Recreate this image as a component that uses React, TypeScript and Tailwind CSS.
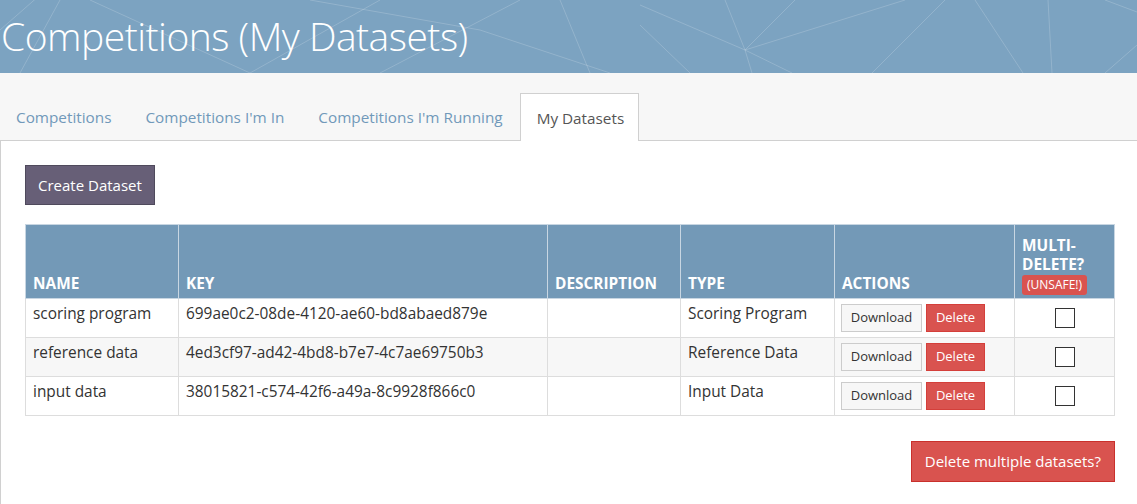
import React from "react";

const rows = [
  { name: "scoring program", key: "699ae0c2-08de-4120-ae60-bd8abaed879e", type: "Scoring Program" },
  { name: "reference data", key: "4ed3cf97-ad42-4bd8-b7e7-4c7ae69750b3", type: "Reference Data" },
  { name: "input data", key: "38015821-c574-42f6-a49a-8c9928f866c0", type: "Input Data" },
];

const tabs = ["Competitions", "Competitions I'm In", "Competitions I'm Running", "My Datasets"];

const BannerLines = () => (
  <svg className="absolute inset-0 h-full w-full" viewBox="0 0 1137 73" preserveAspectRatio="none">
    <g stroke="#ffffff" strokeOpacity="0.18" strokeWidth="1" fill="none">
      <line x1="0" y1="30" x2="40" y2="-5" />
      <line x1="60" y1="0" x2="20" y2="73" />
      <line x1="90" y1="0" x2="250" y2="73" />
      <line x1="250" y1="73" x2="380" y2="0" />
      <line x1="310" y1="0" x2="480" y2="30" />
      <line x1="480" y1="30" x2="610" y2="73" />
      <line x1="380" y1="73" x2="520" y2="0" />
      <line x1="560" y1="0" x2="590" y2="73" />
      <line x1="640" y1="5" x2="745" y2="50" />
      <line x1="640" y1="25" x2="690" y2="73" />
      <line x1="725" y1="0" x2="745" y2="50" />
      <line x1="745" y1="50" x2="795" y2="0" />
      <line x1="745" y1="50" x2="905" y2="0" />
      <line x1="745" y1="50" x2="752" y2="73" />
      <line x1="745" y1="50" x2="792" y2="73" />
      <line x1="872" y1="73" x2="945" y2="0" />
      <line x1="975" y1="0" x2="1023" y2="73" />
      <line x1="1048" y1="0" x2="1052" y2="73" />
      <line x1="1105" y1="0" x2="1137" y2="12" />
      <line x1="1105" y1="73" x2="1137" y2="45" />
    </g>
  </svg>
);

export default function App() {
  return (
    <div
      className="min-h-screen w-full bg-white text-[#333]"
      style={{ fontFamily: '"Open Sans", "Noto Sans", sans-serif' }}
    >
      <div className="relative h-[73px] overflow-hidden bg-[#7ca3c1]">
        <BannerLines />
        <h1 className="relative pl-[1px] pt-[11px] text-[39px] font-light leading-[50px] tracking-[-0.5px] text-white">
          Competitions (My Datasets)
        </h1>
      </div>

      <div className="flex h-[68px] items-end border-b border-[#d0d0d0] bg-[#f7f7f7]">
        <div className="-ml-px flex">
          {tabs.map((t, i) => {
            const active = i === tabs.length - 1;
            return (
              <div
                key={t}
                className={
                  active
                    ? "-mb-px flex h-[48px] items-center border border-b-0 border-[#d0d0d0] bg-white pl-[16px] pr-[14px] pt-[2px] text-[15.3px] text-[#555]"
                    : "flex h-[47px] items-center px-[17px] pt-[2px] text-[15.3px] text-[#7199ba]"
                }
              >
                {t}
              </div>
            );
          })}
        </div>
      </div>

      <div className="border-l border-[#d0d0d0] px-[24px] pt-[24px] pb-[22px]">
        <button className="h-[40px] border border-[#4f4a5c] bg-[#675f77] px-[12px] text-[15px] text-white">
          Create Dataset
        </button>

        <table className="mt-[19px] w-[1090px] border-collapse text-[15.4px]">
          <thead>
            <tr className="bg-[#7399b7] text-white">
              <th className="h-[74px] w-[153px] border border-[#c8d6e2] px-[7px] pb-[3px] text-left align-bottom font-bold uppercase">
                Name
              </th>
              <th className="w-[369px] border border-[#c8d6e2] px-[7px] pb-[3px] text-left align-bottom font-bold uppercase">
                Key
              </th>
              <th className="w-[133px] border border-[#c8d6e2] px-[7px] pb-[3px] text-left align-bottom font-bold uppercase">
                Description
              </th>
              <th className="w-[154px] border border-[#c8d6e2] px-[7px] pb-[3px] text-left align-bottom font-bold uppercase">
                Type
              </th>
              <th className="w-[180px] border border-[#c8d6e2] px-[7px] pb-[3px] text-left align-bottom font-bold uppercase">
                Actions
              </th>
              <th className="border border-[#c8d6e2] px-[7px] pb-[3px] text-left align-bottom font-bold uppercase leading-[19px]">
                <div>Multi-</div>
                <div>Delete?</div>
                <span className="mt-[1px] inline-block rounded-[3px] bg-[#d9534f] px-[5px] text-[12px] font-normal leading-[20px]">
                  (UNSAFE!)
                </span>
              </th>
            </tr>
          </thead>
          <tbody>
            {rows.map((r, i) => (
              <tr key={r.key} className={i === 1 ? "bg-[#f7f7f7]" : "bg-white"}>
                <td className="h-[39px] border border-[#dddddd] px-[7px] pb-[9px] align-middle">{r.name}</td>
                <td className="border border-[#dddddd] px-[7px] pb-[9px] align-middle">{r.key}</td>
                <td className="border border-[#dddddd] px-[7px] align-middle"></td>
                <td className="border border-[#dddddd] px-[7px] pb-[9px] align-middle">{r.type}</td>
                <td className="border border-[#dddddd] px-[6px] align-middle">
                  <div className="flex gap-[4px]">
                    <button className="h-[28px] w-[81px] border border-[#cccccc] bg-[#f7f7f7] text-[13px] text-[#333]">
                      Download
                    </button>
                    <button className="h-[28px] w-[59px] border border-[#d43f3a] bg-[#d9534f] text-[13px] text-white">
                      Delete
                    </button>
                  </div>
                </td>
                <td className="border border-[#dddddd] align-middle">
                  <div className="mx-auto h-[20px] w-[20px] border border-[#333] bg-white"></div>
                </td>
              </tr>
            ))}
          </tbody>
        </table>

        <div className="mt-[25px] flex w-[1090px] justify-end">
          <button className="h-[41px] border border-[#c9302c] bg-[#d9534f] px-[13px] text-[15px] text-white">
            Delete multiple datasets?
          </button>
        </div>
      </div>
    </div>
  );
}
